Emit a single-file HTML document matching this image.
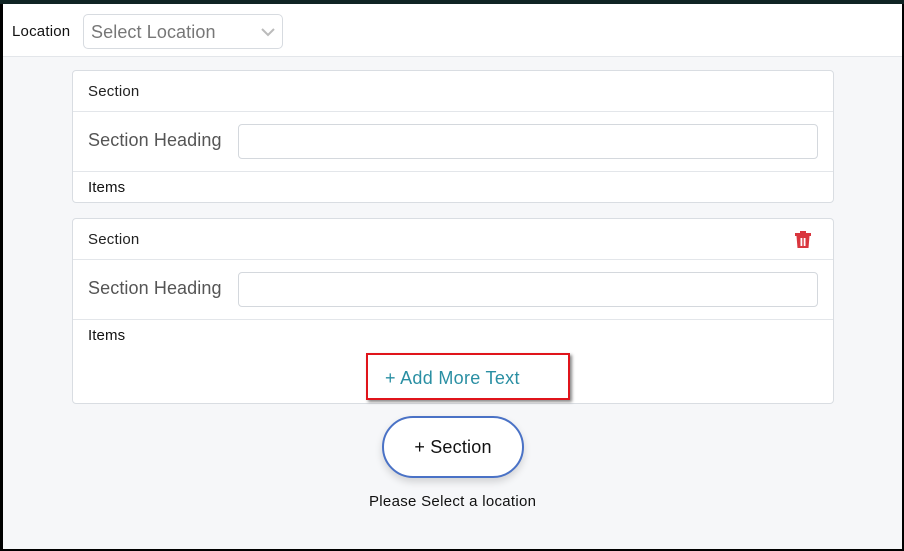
<!DOCTYPE html><html><head><style>
*{box-sizing:border-box}
body{margin:0;width:904px;height:551px;background:#000;font-family:"Liberation Sans",sans-serif;overflow:hidden;position:relative}
.top{position:absolute;left:0;top:0;width:904px;height:4px;background:#0f2424}
.main{position:absolute;left:3px;top:4px;width:899px;height:545px;background:#f6f7f9}
.hdr{position:absolute;left:0;top:0;width:899px;height:53px;background:#fff;border-bottom:1px solid #e3e6ea}
.lbl{position:absolute;left:9px;top:19px;font-size:15px;letter-spacing:.2px;color:#111}
.sel{position:absolute;left:80px;top:10px;width:200px;height:35px;border:1px solid #d7dbe0;border-radius:5px;font-size:18px;color:#777;padding:7px 7px;letter-spacing:.1px}
.card{position:absolute;left:69px;width:762px;background:#fff;border:1px solid #d9dde2;border-radius:4px}
.ch{height:41px;border-bottom:1px solid #e3e6ea;font-size:15px;color:#222;padding:12px 15px;position:relative;letter-spacing:.2px}
.row{height:60px;border-bottom:1px solid #e3e6ea;position:relative}
.row span{position:absolute;left:15px;top:18px;font-size:18px;color:#555;letter-spacing:.1px}
.row div{position:absolute;left:165px;top:12px;width:580px;height:35px;border:1px solid #d4d8dd;border-radius:4px}
.it{font-size:15px;color:#111;padding:7px 15px;letter-spacing:.1px}
.add{position:absolute;left:363px;top:349px;width:204px;height:47px;border:2px solid #e0141b;box-shadow:2px 2px 3px #888;background:#fff;color:#2a8fa3;font-size:18px;padding:13px 17px;letter-spacing:.3px}
.btn{position:absolute;left:379px;top:412px;width:142px;height:62px;border:2px solid #4a72c6;border-radius:31px;background:#fff;font-size:18px;color:#111;text-align:center;line-height:58px;box-shadow:0 4px 8px rgba(0,0,0,.15);letter-spacing:.2px}
.msg{position:absolute;left:366px;top:489px;font-size:15px;color:#111;letter-spacing:.3px}
</style></head><body>
<div class="top"></div>
<div class="main">
<div class="hdr"><div class="lbl">Location</div><div class="sel">Select Location<svg style="position:absolute;right:6px;top:12px" width="16" height="10"><path d="M2 2l6 6 6-6" stroke="#bbb" stroke-width="2" fill="none"/></svg></div></div>
<div class="card" style="top:66px;height:133px"><div class="ch">Section</div><div class="row"><span>Section Heading</span><div></div></div><div class="it">Items</div></div>
<div class="card" style="top:214px;height:186px"><div class="ch">Section<svg style="position:absolute;right:22px;top:12px" width="16" height="17"><rect x="0" y="2" width="16" height="3" fill="#d9363e"/><rect x="5" y="0" width="6" height="3" fill="#d9363e"/><path d="M1.5 5h13l-1 12h-11z" fill="#d9363e"/><rect x="5.5" y="7" width="1.8" height="8" fill="#fff"/><rect x="8.7" y="7" width="1.8" height="8" fill="#fff"/></svg></div><div class="row"><span>Section Heading</span><div></div></div><div class="it">Items</div></div>
<div class="add">+ Add More Text</div>
<div class="btn">+ Section</div>
<div class="msg">Please Select a location</div>
</div>
</body></html>
